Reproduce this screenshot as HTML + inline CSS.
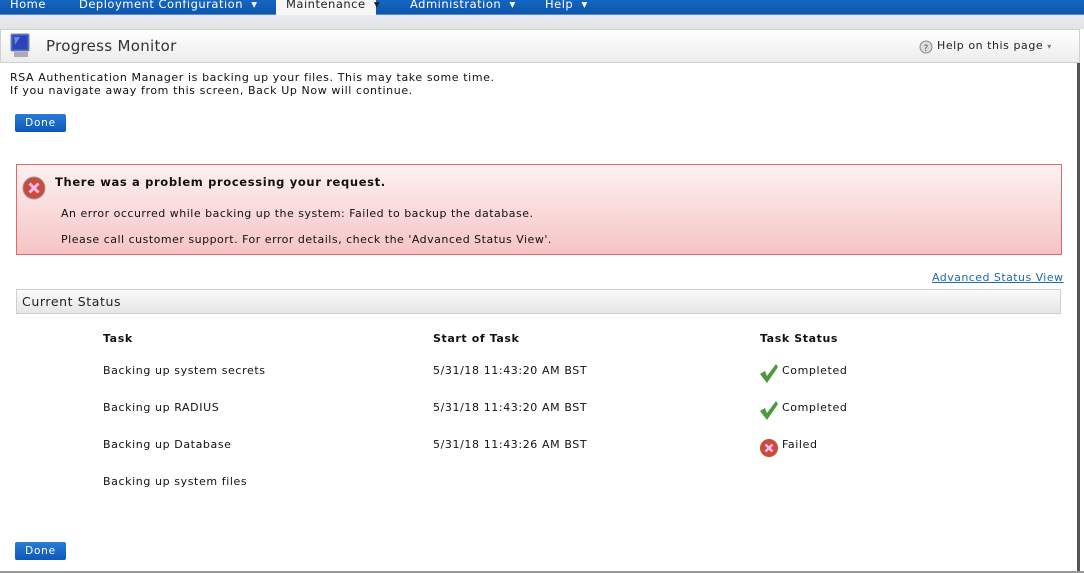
<!DOCTYPE html>
<html><head><style>
*{margin:0;padding:0;box-sizing:border-box}
body{width:1084px;height:573px;overflow:hidden;background:#fff;font-family:"DejaVu Sans",Verdana,sans-serif;font-size:11px;letter-spacing:.6px;color:#111;position:relative}
.a{position:absolute;white-space:nowrap}
.nav{position:absolute;left:0;top:0;width:1084px;height:15px;background:linear-gradient(#1565c0,#0d56ad);border-bottom:1px solid #5a8ad0}
.nav span{position:absolute;top:-3px;color:#fff;font-size:11.5px;letter-spacing:.5px}
.tab{position:absolute;left:276px;top:0;width:100px;height:15px;background:#f6f6f6}
.gap{position:absolute;left:0;top:15px;width:1084px;height:14px;background:linear-gradient(#e8ecf0,#e2e4e6)}
.hdr{position:absolute;left:0;top:29px;width:1080px;height:34px;background:linear-gradient(#fff,#ececec);border:1px solid #d0d0d0}
.btn{position:absolute;width:51px;height:18px;background:linear-gradient(#2a7ad6,#0b58b8);border-radius:2px;color:#fff;font-size:10.5px;text-align:center;line-height:19px;letter-spacing:.8px}
.err{position:absolute;left:16px;top:164px;width:1046px;height:91px;border:1px solid #e06a6a;background:linear-gradient(#fdf1f1,#f6c4c4)}
.cs{position:absolute;left:16px;top:289px;width:1045px;height:25px;border:1px solid #cfcfcf;background:linear-gradient(#fafafa,#e6e6e6)}
b{font-weight:bold}
</style></head><body>
<div class="nav">
<div class="tab"></div>
<span style="left:10px">Home</span>
<span style="left:79px">Deployment Configuration &nbsp;▾</span>
<span style="left:286px;color:#222">Maintenance &nbsp;▾</span>
<span style="left:410px">Administration &nbsp;▾</span>
<span style="left:545px">Help &nbsp;▾</span>
</div>
<div class="gap"></div>
<div class="hdr">
<svg class="a" style="left:9px;top:3px" width="22" height="26" viewBox="0 0 22 26"><rect x="1" y="1" width="18" height="17" rx="1" fill="#3b57c8" stroke="#7a8aa8"/><rect x="3" y="3" width="14" height="13" fill="#2d44b8"/><path d="M4 4 L10 4 L5 12Z" fill="#6a86e6"/><rect x="4" y="19" width="14" height="5" fill="#aab"/></svg>
<div class="a" style="left:45px;top:7px;font-size:15px;color:#333;letter-spacing:.3px">Progress Monitor</div>
<svg class="a" style="left:918px;top:10px" width="14" height="14"><circle cx="7" cy="7" r="6" fill="#ddd" stroke="#888"/><text x="4.5" y="11" font-size="9" fill="#555" font-family="DejaVu Sans">?</text></svg>
<div class="a" style="left:936px;top:9px;font-size:11px;color:#222;letter-spacing:.55px">Help on this page <span style="font-size:8px;color:#777">▾</span></div>
</div>
<div class="a" style="left:1077px;top:63px;width:3px;height:508px;background:#555"></div>
<div class="a" style="left:0;top:571px;width:1084px;height:2px;background:#999"></div>
<div class="a" style="left:10px;top:71px">RSA Authentication Manager is backing up your files. This may take some time.</div>
<div class="a" style="left:10px;top:84px">If you navigate away from this screen, Back Up Now will continue.</div>
<div class="btn" style="left:15px;top:114px">Done</div>
<div class="err">
<svg class="a" style="left:5px;top:11px" width="24" height="24"><circle cx="12" cy="12" r="11" fill="#c84b3c" stroke="#999"/><path d="M7.5 7.5L16.5 16.5M16.5 7.5L7.5 16.5" stroke="#fbe" stroke-width="3"/></svg>
<div class="a" style="left:38px;top:10px;font-weight:bold;font-size:11.5px;letter-spacing:.65px">There was a problem processing your request.</div>
<div class="a" style="left:44px;top:42px;letter-spacing:.5px">An error occurred while backing up the system: Failed to backup the database.</div>
<div class="a" style="left:44px;top:68px;letter-spacing:.5px">Please call customer support. For error details, check the 'Advanced Status View'.</div>
</div>
<div class="a" style="left:932px;top:271px;color:#1f6aa8;text-decoration:underline;letter-spacing:.45px">Advanced Status View</div>
<div class="cs"><div class="a" style="left:5px;top:4px;font-size:12.5px;color:#222;letter-spacing:.6px">Current Status</div></div>
<div class="a" style="left:103px;top:332px"><b>Task</b></div>
<div class="a" style="left:433px;top:332px"><b>Start of Task</b></div>
<div class="a" style="left:760px;top:332px"><b>Task Status</b></div>
<div class="a" style="left:103px;top:364px">Backing up system secrets</div>
<div class="a" style="left:433px;top:364px">5/31/18 11:43:20 AM BST</div>
<div class="a" style="left:103px;top:401px">Backing up RADIUS</div>
<div class="a" style="left:433px;top:401px">5/31/18 11:43:20 AM BST</div>
<div class="a" style="left:103px;top:438px">Backing up Database</div>
<div class="a" style="left:433px;top:438px">5/31/18 11:43:26 AM BST</div>
<div class="a" style="left:103px;top:475px">Backing up system files</div>
<svg class="a" style="left:759px;top:362px" width="20" height="22"><path d="M1 12 L6 9 L8 14 L17 2 L19 5 L8 21 Z" fill="#4c9a3e"/></svg>
<div class="a" style="left:782px;top:364px">Completed</div>
<svg class="a" style="left:759px;top:399px" width="20" height="22"><path d="M1 12 L6 9 L8 14 L17 2 L19 5 L8 21 Z" fill="#4c9a3e"/></svg>
<div class="a" style="left:782px;top:401px">Completed</div>
<svg class="a" style="left:759px;top:438px" width="20" height="20"><circle cx="10" cy="10" r="9" fill="#c84b3c"/><path d="M6.5 6.5L13.5 13.5M13.5 6.5L6.5 13.5" stroke="#fbe" stroke-width="2.5"/></svg>
<div class="a" style="left:782px;top:438px">Failed</div>
<div class="btn" style="left:15px;top:542px">Done</div>
</body></html>
